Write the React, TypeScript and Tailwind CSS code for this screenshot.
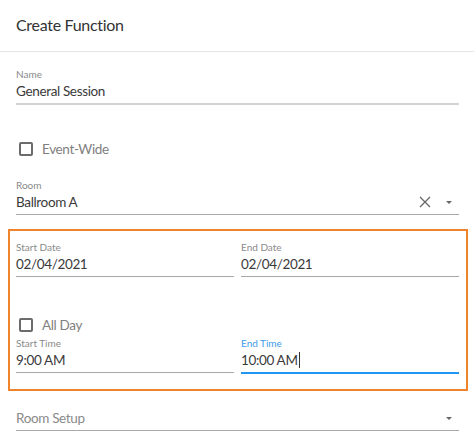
import type { ReactNode } from "react";

const font = { fontFamily: "Lato, 'Noto Sans', sans-serif" };

function Caret() {
  return (
    <svg width="8" height="5" viewBox="0 0 8 5" className="shrink-0">
      <path d="M1 1 L7 1 L4 4 Z" fill="#666" />
    </svg>
  );
}

function ClearIcon() {
  return (
    <svg width="12" height="12" viewBox="0 0 12 12" className="shrink-0">
      <path d="M1 1 L11 11 M11 1 L1 11" stroke="#666" strokeWidth="1.3" fill="none" />
    </svg>
  );
}

function Field({
  label,
  value,
  active,
  thick,
  right,
}: {
  label: string;
  value: ReactNode;
  active?: boolean;
  thick?: boolean;
  right?: ReactNode;
}) {
  const line = active
    ? "border-b-2 border-[#2196f3]"
    : thick
      ? "border-b-2 border-[#d2d2d2]"
      : "border-b border-[#a8a8a8]";
  return (
    <div className={`flex flex-col pb-[2px] ${line}`}>
      <div
        className={`h-[13px] text-[10px] leading-[13px] ${active ? "text-[#3d9be9]" : "text-[#8a8a8a]"}`}
      >
        {label}
      </div>
      <div className="flex h-[20px] items-center">
        <div className="flex-1 text-[13.5px] leading-[20px] tracking-[-0.35px] text-[#3a3a3a]">
          {value}
        </div>
        {right}
      </div>
    </div>
  );
}

function Check({ label }: { label: string }) {
  return (
    <div className="flex h-[20px] items-center">
      <div className="ml-[3px] h-[14px] w-[14px] rounded-[2px] border-2 border-[#6b6b6b]" />
      <span className="ml-[9px] text-[13.5px] tracking-[-0.35px] text-[#808080]">{label}</span>
    </div>
  );
}

export default function App() {
  return (
    <div className="h-[441px] w-[474px] overflow-hidden bg-white" style={font}>
      {/* header */}
      <div className="flex h-[52px] items-center border-b border-[#e6e6e6] px-4 pb-[2px]">
        <h1 className="text-[16px] tracking-[-0.3px] text-[#333]">Create Function</h1>
      </div>

      <div className="flex flex-col pl-4 pr-[15px]">
        <div className="mt-[16px]">
          <Field label="Name" value="General Session" thick />
        </div>

        <div className="mt-[34px]">
          <Check label="Event-Wide" />
        </div>

        <div className="mt-[20px]">
          <Field
            label="Room"
            value="Ballroom A"
            right={
              <div className="flex items-center gap-[14px] pr-[6px]">
                <ClearIcon />
                <Caret />
              </div>
            }
          />
        </div>
      </div>

      {/* highlighted date/time block */}
      <div className="ml-[8px] mt-[14px] w-[460px] border-2 border-[#f0842c] pb-[15px] pl-[6px] pr-[7px] pt-[10px]">
        <div className="grid grid-cols-2 items-start gap-[7px]">
          <Field label="Start Date" value="02/04/2021" />
          <Field label="End Date" value="02/04/2021" />
        </div>
        <div className="mt-[38px]">
          <Check label="All Day" />
        </div>
        <div className="mt-[2px] grid grid-cols-2 items-start gap-[7px]">
          <Field label="Start Time" value="9:00 AM" />
          <Field
            label="End Time"
            active
            value={
              <span className="inline-flex items-center">
                10:00 AM
                <span className="ml-px inline-block h-[16px] w-px bg-[#333]" />
              </span>
            }
          />
        </div>
      </div>

      <div className="mt-[17px] pl-4 pr-[15px]">
        <div className="flex h-[23px] items-start border-b border-[#a8a8a8] pb-[3px]">
          <div className="flex h-[20px] flex-1 items-center text-[13.5px] tracking-[-0.35px] text-[#8a8a8a]">
            Room Setup
          </div>
          <div className="flex h-[20px] items-center pr-[6px]">
            <Caret />
          </div>
        </div>
      </div>
    </div>
  );
}
